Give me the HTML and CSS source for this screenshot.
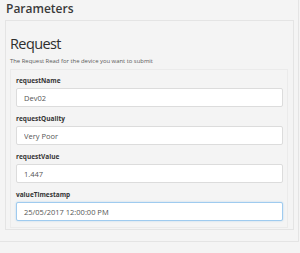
FILE: index.html
```html
<!DOCTYPE html>
<html lang="en">
<head>
  <meta charset="UTF-8">
  <meta name="viewport" content="width=device-width, initial-scale=1.0">
  <title>Parameters</title>
  <link rel="stylesheet" href="styles.css">
</head>
<body>
  <div class="page">
    <h1 class="title">Parameters</h1>
    <div class="panel">
      <h2 class="panel-title">Request</h2>
      <p class="panel-desc">The Request Read for the device you want to submit</p>
      <div class="fields">
        <div class="field">
          <label for="requestName">requestName</label>
          <input id="requestName" type="text" value="Dev02">
        </div>
        <div class="field">
          <label for="requestQuality">requestQuality</label>
          <input id="requestQuality" type="text" value="Very Poor">
        </div>
        <div class="field">
          <label for="requestValue">requestValue</label>
          <input id="requestValue" type="text" value="1.447">
        </div>
        <div class="field">
          <label for="valueTimestamp">valueTimestamp</label>
          <input id="valueTimestamp" type="text" value="25/05/2017 12:00:00 PM" class="focused">
        </div>
      </div>
    </div>
  </div>
</body>
</html>
```

FILE: styles.css
```css
:root {
  --bg: #f4f4f4;
  --line: #e4e4e4;
  --text: #333333;
  --input-text: #555555;
  --focus: #9fcbef;
}
* { box-sizing: border-box; }
body {
  margin: 0;
  background: var(--bg);
  font-family: "Open Sans", "Noto Sans", sans-serif;
  color: var(--text);
}
.page {
  width: 299px;
  height: 242px;
  padding: 0 5px 0 5px;
  border-right: 1px solid var(--line);
  border-bottom: 1px solid var(--line);
}
.title {
  margin: 0;
  padding: 1px 0 0 1px;
  font-size: 12px;
  line-height: 16px;
  font-weight: 600;
  color: #3a3a3a;
}
.panel {
  margin-top: 3px;
  width: 289px;
  height: 210px;
  border: 1px solid var(--line);
  padding: 14px 5px 0 4px;
}
.panel-title {
  margin: 0;
  font-size: 14.5px;
  line-height: 18px;
  font-weight: 400;
  letter-spacing: -0.6px;
  color: #2e2e2e;
}
.panel-desc {
  margin: 4px 0 0 0;
  font-size: 5.9px;
  line-height: 8px;
  color: #5a5a5a;
}
.fields {
  margin-top: 4px;
  border: 1px solid #ebebeb;
  padding: 6px 4px 6px 5px;
  display: flex;
  flex-direction: column;
  gap: 7px;
}
.field {
  display: flex;
  flex-direction: column;
  gap: 3px;
}
.field label {
  font-size: 6.5px;
  line-height: 9px;
  font-weight: 700;
  color: #333333;
}
.field input {
  height: 19px;
  border: 1px solid #dcdcdc;
  border-radius: 2px;
  background: #ffffff;
  padding: 0 7px;
  font-family: inherit;
  font-size: 7.5px;
  color: var(--input-text);
  outline: none;
}
.field input.focused {
  border-color: var(--focus);
  box-shadow: 0 0 2px rgba(102, 175, 233, 0.45);
}
```
